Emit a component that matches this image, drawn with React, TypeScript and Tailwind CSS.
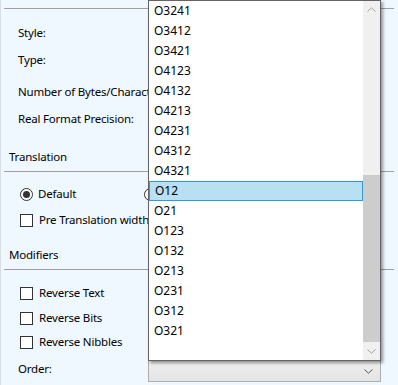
import React from "react";

const orders = [
  "O3241",
  "O3412",
  "O3421",
  "O4123",
  "O4132",
  "O4213",
  "O4231",
  "O4312",
  "O4321",
  "O12",
  "O21",
  "O123",
  "O132",
  "O213",
  "O231",
  "O312",
  "O321",
];

const SELECTED = "O12";

function Separator({ className = "" }: { className?: string }) {
  return <div className={`ml-[3px] h-px w-[390px] shrink-0 bg-[#a0a0a0] ${className}`} />;
}

function Checkbox({ label, className = "" }: { label: string; className?: string }) {
  return (
    <div className={`flex h-[20px] w-[147px] shrink-0 items-center overflow-hidden pl-[19px] ${className}`}>
      <span className="h-[13px] w-[13px] shrink-0 border border-[#333333] bg-white" />
      <span className="ml-[6px] whitespace-nowrap">{label}</span>
    </div>
  );
}

function Radio({ checked }: { checked?: boolean }) {
  return (
    <span className="flex h-[13px] w-[13px] shrink-0 items-center justify-center rounded-full border border-[#333333] bg-white">
      {checked && <span className="h-[7px] w-[7px] rounded-full bg-[#333333]" />}
    </span>
  );
}

function Chevron({ up, className = "" }: { up?: boolean; className?: string }) {
  return (
    <svg width="9" height="5" viewBox="0 0 9 5" className={className}>
      <path
        d={up ? "M0.5 4.5 L4.5 0.8 L8.5 4.5" : "M0.5 0.5 L4.5 4.2 L8.5 0.5"}
        fill="none"
        stroke="currentColor"
        strokeWidth="1"
      />
    </svg>
  );
}

export default function App() {
  return (
    <div className="relative h-[385px] w-[398px] overflow-hidden border-l border-[#d8dee6] bg-[#eff7ff] font-['Noto_Sans',sans-serif] text-[11.5px] leading-none tracking-[-0.2px] text-black">
      {/* ── Properties panel ── */}
      <div className="flex flex-col">
        <Separator className="mt-[8px]" />
        <div className="mt-[14px] flex h-[20px] items-center pl-[17px]">Style:</div>
        <div className="mt-[7px] flex h-[20px] items-center pl-[17px]">Type:</div>
        <div className="mt-[12px] flex h-[20px] w-[147px] items-center overflow-hidden whitespace-nowrap pl-[17px]">
          Number of Bytes/Characters:
        </div>
        <div className="mt-[7px] flex h-[20px] items-center pl-[17px]">Real Format Precision:</div>

        <div className="mt-[18px] flex h-[20px] items-center pl-[8px]">Translation</div>
        <Separator className="mt-[4px]" />
        <div className="mt-[12px] flex h-[20px] items-center pl-[19px]">
          <Radio checked />
          <span className="ml-[5px] w-[106px]">Default</span>
          <Radio />
        </div>
        <Checkbox label="Pre Translation width:" className="mt-[6px]" />

        <div className="mt-[15px] flex h-[20px] items-center pl-[8px]">Modifiers</div>
        <Separator className="mt-[4px]" />
        <Checkbox label="Reverse Text" className="mt-[13px]" />
        <Checkbox label="Reverse Bits" className="mt-[5px]" />
        <Checkbox label="Reverse Nibbles" className="mt-[4px]" />

        <div className="mt-[8px] flex h-[22px] items-center">
          <span className="w-[147px] pb-[4px] pl-[17px]">Order:</span>
          <div className="flex h-[22px] w-[233px] items-center justify-end border border-[#adadad] bg-gradient-to-b from-[#efefef] to-[#e4e4e4] pr-[7px] text-[#555555]">
            <Chevron />
          </div>
        </div>
      </div>

      {/* ── Open drop-down list ── */}
      <div className="absolute left-[147px] top-0 flex h-[361px] w-[233px] border border-[#646464] bg-white text-[12px] tracking-normal shadow-[2px_2px_3px_rgba(0,0,0,0.4)]">
        <ul className="flex-1 overflow-hidden">
          {orders.map((o) => (
            <li
              key={o}
              className={`flex h-[20px] items-center pl-[5px] ${
                o === SELECTED ? "border border-[#2e9bd6] bg-[#b9dff2] pl-[4px]" : ""
              }`}
            >
              {o}
            </li>
          ))}
        </ul>
        <div className="flex w-[17px] flex-col bg-[#f0f0f0] text-[#a3a3a3]">
          <div className="flex h-[17px] items-center justify-center">
            <Chevron up />
          </div>
          <div className="mt-[157px] h-[167px] bg-[#cdcdcd]" />
          <div className="flex flex-1 items-center justify-center">
            <Chevron />
          </div>
        </div>
      </div>
    </div>
  );
}
